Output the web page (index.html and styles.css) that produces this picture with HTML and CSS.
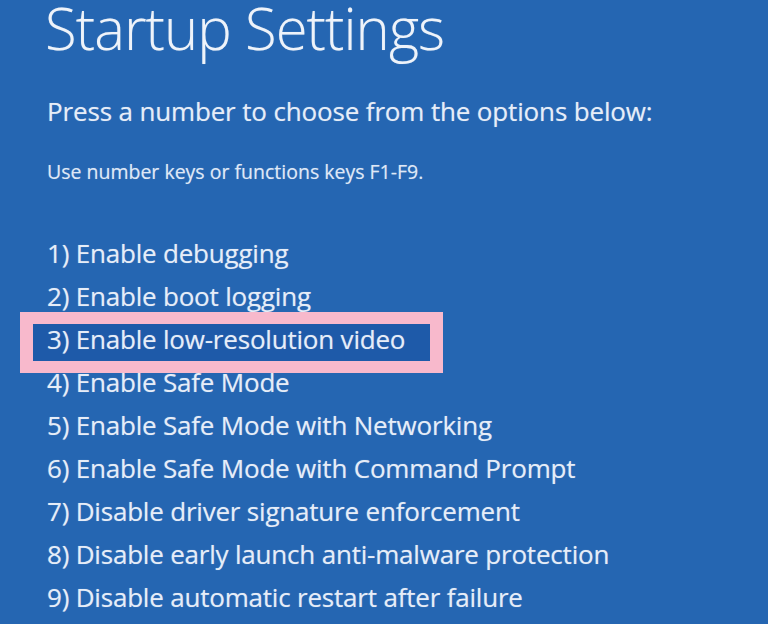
FILE: index.html
```html
<!DOCTYPE html>
<html>
<head>
<meta charset="utf-8">
<link rel="stylesheet" href="styles.css">
</head>
<body>
<div class="screen">
  <h1 class="title">Startup Settings</h1>
  <p class="lead">Press a number to choose from the options below:</p>
  <p class="hint">Use number keys or functions keys F1-F9.</p>
  <ol class="options">
    <li>1) Enable debugging</li>
    <li>2) Enable boot logging</li>
    <li class="selected">3) Enable low-resolution video</li>
    <li>4) Enable Safe Mode</li>
    <li>5) Enable Safe Mode with Networking</li>
    <li>6) Enable Safe Mode with Command Prompt</li>
    <li>7) Disable driver signature enforcement</li>
    <li>8) Disable early launch anti-malware protection</li>
    <li>9) Disable automatic restart after failure</li>
  </ol>
</div>
</body>
</html>
```
FILE: styles.css
```css
html, body {
  margin: 0;
  padding: 0;
  background: #2566b2;
}
.screen {
  width: 768px;
  height: 624px;
  overflow: hidden;
  box-sizing: border-box;
  padding: 0 0 0 45px;
  font-family: "Open Sans", "Noto Sans", sans-serif;
  color: #eef3fa;
  text-shadow: 0 0 1px rgba(255,255,255,0.4);
}
.title {
  margin: 0;
  font-weight: 300;
  font-size: 58px;
  line-height: 56px;
  letter-spacing: -0.95px;
}
.lead {
  margin: 40px 0 0 2px;
  font-size: 26px;
  line-height: 30px;
  letter-spacing: -0.15px;
  color: #e6edf8;
}
.hint {
  margin: 34px 0 0 2px;
  font-size: 19.5px;
  line-height: 24px;
  letter-spacing: 0;
  color: #dfe8f6;
}
.options {
  list-style: none;
  margin: 48px 0 0 2px;
  padding: 0;
  font-size: 26px;
  line-height: 43px;
  letter-spacing: -0.2px;
  color: #e6edf8;
}
.options li {
  position: relative;
  white-space: nowrap;
}
.selected {
  z-index: 0;
}
.selected::before {
  content: "";
  position: absolute;
  left: -27px;
  top: -6px;
  width: 397px;
  height: 37px;
  border: 13px solid #f8b9cc;
  border-top-width: 12px;
  border-bottom-width: 12px;
  background: #1e5aa9;
  z-index: -1;
}
```
